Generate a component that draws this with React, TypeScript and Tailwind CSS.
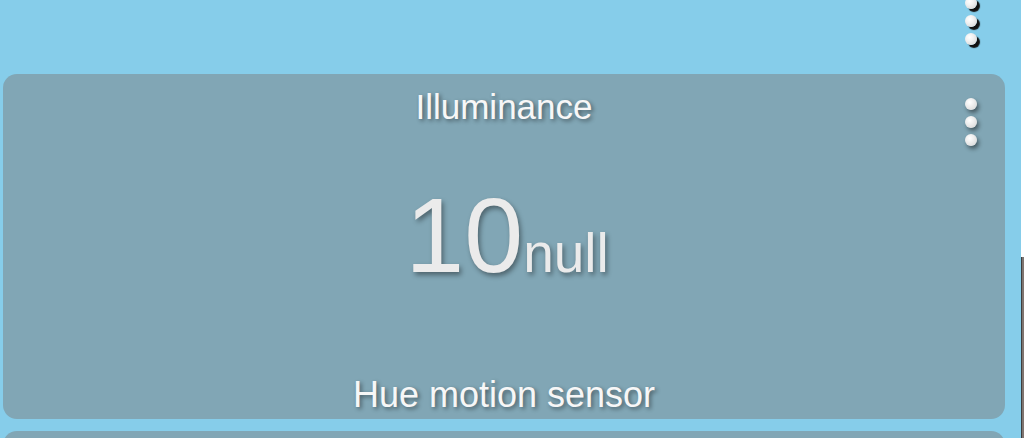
import React from "react";

function Dot({ hard }: { hard?: boolean }) {
  return (
    <div
      className={
        hard
          ? "w-[12px] h-[12px] rounded-full bg-[radial-gradient(circle_at_38%_35%,#ffffff_0%,#f2f2f2_35%,#cfcfcf_100%)] shadow-[3px_3px_1px_#111]"
          : "w-[12px] h-[12px] rounded-full bg-[radial-gradient(circle_at_38%_35%,#ffffff_0%,#f0f0f0_35%,#d2d2d2_100%)] shadow-[2px_3px_4px_rgba(0,0,0,0.45)]"
      }
    />
  );
}

function Dots({ hard }: { hard?: boolean }) {
  return (
    <div className="flex flex-col gap-[6px]">
      <Dot hard={hard} />
      <Dot hard={hard} />
      <Dot hard={hard} />
    </div>
  );
}

export default function App() {
  const font = { fontFamily: '"Liberation Sans", Arial, sans-serif' };
  return (
    <div
      className="w-[1024px] h-[438px] overflow-hidden bg-[#86cdea] flex"
      style={font}
    >
      <div className="flex-1 flex flex-col pl-[3px] pr-[16px]">
        <div className="h-[74px] shrink-0 flex justify-end pr-[28px]">
          <div className="-mt-[3px]">
            <Dots hard />
          </div>
        </div>
        <div className="relative h-[345px] shrink-0 rounded-[14px] bg-[#81a6b5] flex flex-col items-center">
          <div className="absolute top-[24px] right-[28px]">
            <Dots />
          </div>
          <div className="mt-[15px] text-[35px] leading-none text-[#f7f7f7] [text-shadow:2px_2px_4px_rgba(0,0,0,0.45)]">
            Illuminance
          </div>
          <div className="mt-[58px] flex items-baseline leading-none text-[#ebebeb] [text-shadow:2px_3px_5px_rgba(0,0,0,0.4)] pl-[6px]">
            <span className="text-[106px] leading-none">10</span>
            <span className="text-[55px] leading-none">null</span>
          </div>
          <div className="mt-auto mb-[6px] text-[36px] leading-none text-[#f7f7f7] [text-shadow:2px_2px_4px_rgba(0,0,0,0.45)]">
            Hue motion sensor
          </div>
        </div>
        <div className="mt-[12px] h-[40px] shrink-0 rounded-t-[14px] bg-[#81a6b5]" />
      </div>
      <div className="w-[3px] flex flex-col shrink-0">
        <div className="h-[257px] bg-white" />
        <div className="flex-1 bg-[#7d7470] border-l border-[#3f3f3f]" />
      </div>
    </div>
  );
}
